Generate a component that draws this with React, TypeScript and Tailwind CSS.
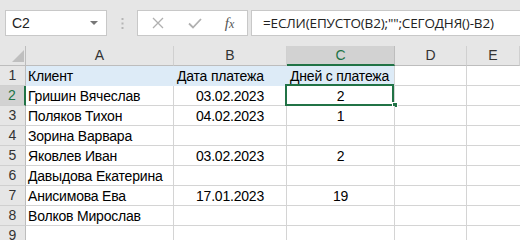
import React from "react";

const cols = [
  { key: "A", w: "w-[148px]" },
  { key: "B", w: "w-[113px]" },
  { key: "C", w: "w-[108px]" },
  { key: "D", w: "w-[72px]" },
  { key: "E", w: "flex-1" },
];

type Row = { n: number; a?: string; b?: string; c?: string; header?: boolean };

const rows: Row[] = [
  { n: 1, a: "Клиент", b: "Дата платежа", c: "Дней с платежа", header: true },
  { n: 2, a: "Гришин Вячеслав", b: "03.02.2023", c: "2" },
  { n: 3, a: "Поляков Тихон", b: "04.02.2023", c: "1" },
  { n: 4, a: "Зорина Варвара" },
  { n: 5, a: "Яковлев Иван", b: "03.02.2023", c: "2" },
  { n: 6, a: "Давыдова Екатерина" },
  { n: 7, a: "Анисимова Ева", b: "17.01.2023", c: "19" },
  { n: 8, a: "Волков Мирослав" },
  { n: 9 },
];

const cellFont = "font-['Liberation_Sans',sans-serif] text-[14px] tracking-[-0.2px] text-black";

export default function App() {
  return (
    <div className="w-[520px] h-[240px] overflow-hidden bg-[#e6e6e6] relative font-['Liberation_Sans',sans-serif]">
      {/* Formula bar */}
      <div className="h-[10px]" />
      <div className="flex items-stretch h-[26px]">
        <div className="ml-[5px] w-[102px] bg-white border border-[#c8c8c8] flex items-center justify-between pl-[6px] pr-[8px]">
          <span className="text-[14px] text-[#222] font-['Liberation_Sans',sans-serif]">C2</span>
          <svg width="8" height="5" viewBox="0 0 8 5">
            <polygon points="0,0 8,0 4,4" fill="#777" />
          </svg>
        </div>
        <div className="w-[30px] flex items-center justify-center">
          <svg width="3" height="11" viewBox="0 0 3 11">
            <rect x="0.5" y="0" width="2" height="2" fill="#b5b5b5" />
            <rect x="0.5" y="4.5" width="2" height="2" fill="#b5b5b5" />
            <rect x="0.5" y="9" width="2" height="2" fill="#b5b5b5" />
          </svg>
        </div>
        <div className="w-[111px] bg-white border border-[#c8c8c8] flex items-center">
          <div className="w-[37px] flex justify-center pl-[2px]">
            <svg width="12" height="12" viewBox="0 0 12 12">
              <path d="M1 1 L11 11 M11 1 L1 11" stroke="#b0b0b0" strokeWidth="1.3" fill="none" />
            </svg>
          </div>
          <div className="w-[37px] flex justify-center pl-[2px]">
            <svg width="14" height="11" viewBox="0 0 14 11">
              <path d="M1 5.5 L5 9.5 L13 1" stroke="#b0b0b0" strokeWidth="1.8" fill="none" />
            </svg>
          </div>
          <div className="w-[35px] flex justify-center">
            <span className="font-['Liberation_Serif',serif] italic text-[15px] text-[#555] leading-none">
              f<span className="text-[12px]">x</span>
            </span>
          </div>
        </div>
        <div className="ml-[3px] flex-1 bg-white border border-[#c8c8c8] border-r-0 flex items-center pl-[11px]">
          <span className="text-[13.5px] text-[#222] font-['Open_Sans',sans-serif] tracking-[-0.15px] whitespace-nowrap">
            =ЕСЛИ(ЕПУСТО(B2);"";СЕГОДНЯ()-B2)
          </span>
        </div>
      </div>
      <div className="h-[10px]" />

      {/* Column headers */}
      <div className="flex h-[20px] bg-[#e6e6e6]">
        <div className="w-[26px] border-r border-b border-[#bdbdbd] relative">
          <svg className="absolute left-[12px] top-[4px]" width="12" height="12" viewBox="0 0 12 12">
            <polygon points="12,0 12,12 0,12" fill="#bfbfbf" />
          </svg>
        </div>
        {cols.map((c) => (
          <div
            key={c.key}
            className={
              c.w +
              " flex items-center justify-center text-[14px] font-['Liberation_Sans',sans-serif] " +
              (c.key === "C"
                ? "bg-[#d2d2d2] text-[#217346] border-b-2 border-b-[#217346] border-r border-r-[#bdbdbd]"
                : "text-[#333] border-b border-b-[#bdbdbd] border-r border-r-[#d0d0d0]")
            }
          >
            {c.key}
          </div>
        ))}
      </div>

      {/* Rows */}
      {rows.map((r) => (
        <div key={r.n} className="flex h-[20px]">
          <div
            className={
              "w-[26px] flex items-center justify-center text-[14px] font-['Liberation_Sans',sans-serif] border-b border-b-[#d0d0d0] " +
              (r.n === 2
                ? "bg-[#d2d2d2] text-[#217346] border-r-2 border-r-[#217346]"
                : "bg-[#e6e6e6] text-[#333] border-r border-r-[#bdbdbd]")
            }
          >
            {r.n}
          </div>
          <div
            className={
              "w-[148px] flex items-center pl-[2px] pt-[1px] border-b " +
              cellFont +
              (r.header ? " bg-[#ddebf7] border-b-[#ddebf7]" : " bg-white border-r border-r-[#d4d4d4] border-b-[#d4d4d4]")
            }
          >
            <span className="whitespace-nowrap">{r.a}</span>
          </div>
          <div
            className={
              "w-[113px] flex items-center pt-[1px] border-b " +
              cellFont +
              (r.header
                ? " bg-[#ddebf7] border-b-[#ddebf7] pl-[3px] justify-start"
                : " bg-white border-r border-r-[#d4d4d4] border-b-[#d4d4d4] justify-center")
            }
          >
            <span className="whitespace-nowrap">{r.b}</span>
          </div>
          <div
            className={
              "w-[108px] flex items-center pt-[1px] border-b border-r relative " +
              cellFont +
              (r.header
                ? " bg-[#ddebf7] border-b-[#ddebf7] border-r-[#d4d4d4] pl-[3px] justify-start"
                : " bg-white border-r-[#d4d4d4] border-b-[#d4d4d4] justify-center")
            }
          >
            <span className="whitespace-nowrap">{r.c}</span>
            {r.n === 2 && (
              <>
                <div className="absolute left-[-2px] top-[-2px] w-[109px] h-[22px] border-2 border-[#217346] pointer-events-none" />
                <div className="absolute right-[-4px] bottom-[-3px] w-[6px] h-[6px] bg-[#217346] border border-white" />
              </>
            )}
          </div>
          <div className="w-[72px] bg-white border-r border-b border-[#d4d4d4]" />
          <div className="flex-1 bg-white border-b border-[#d4d4d4]" />
        </div>
      ))}
    </div>
  );
}
